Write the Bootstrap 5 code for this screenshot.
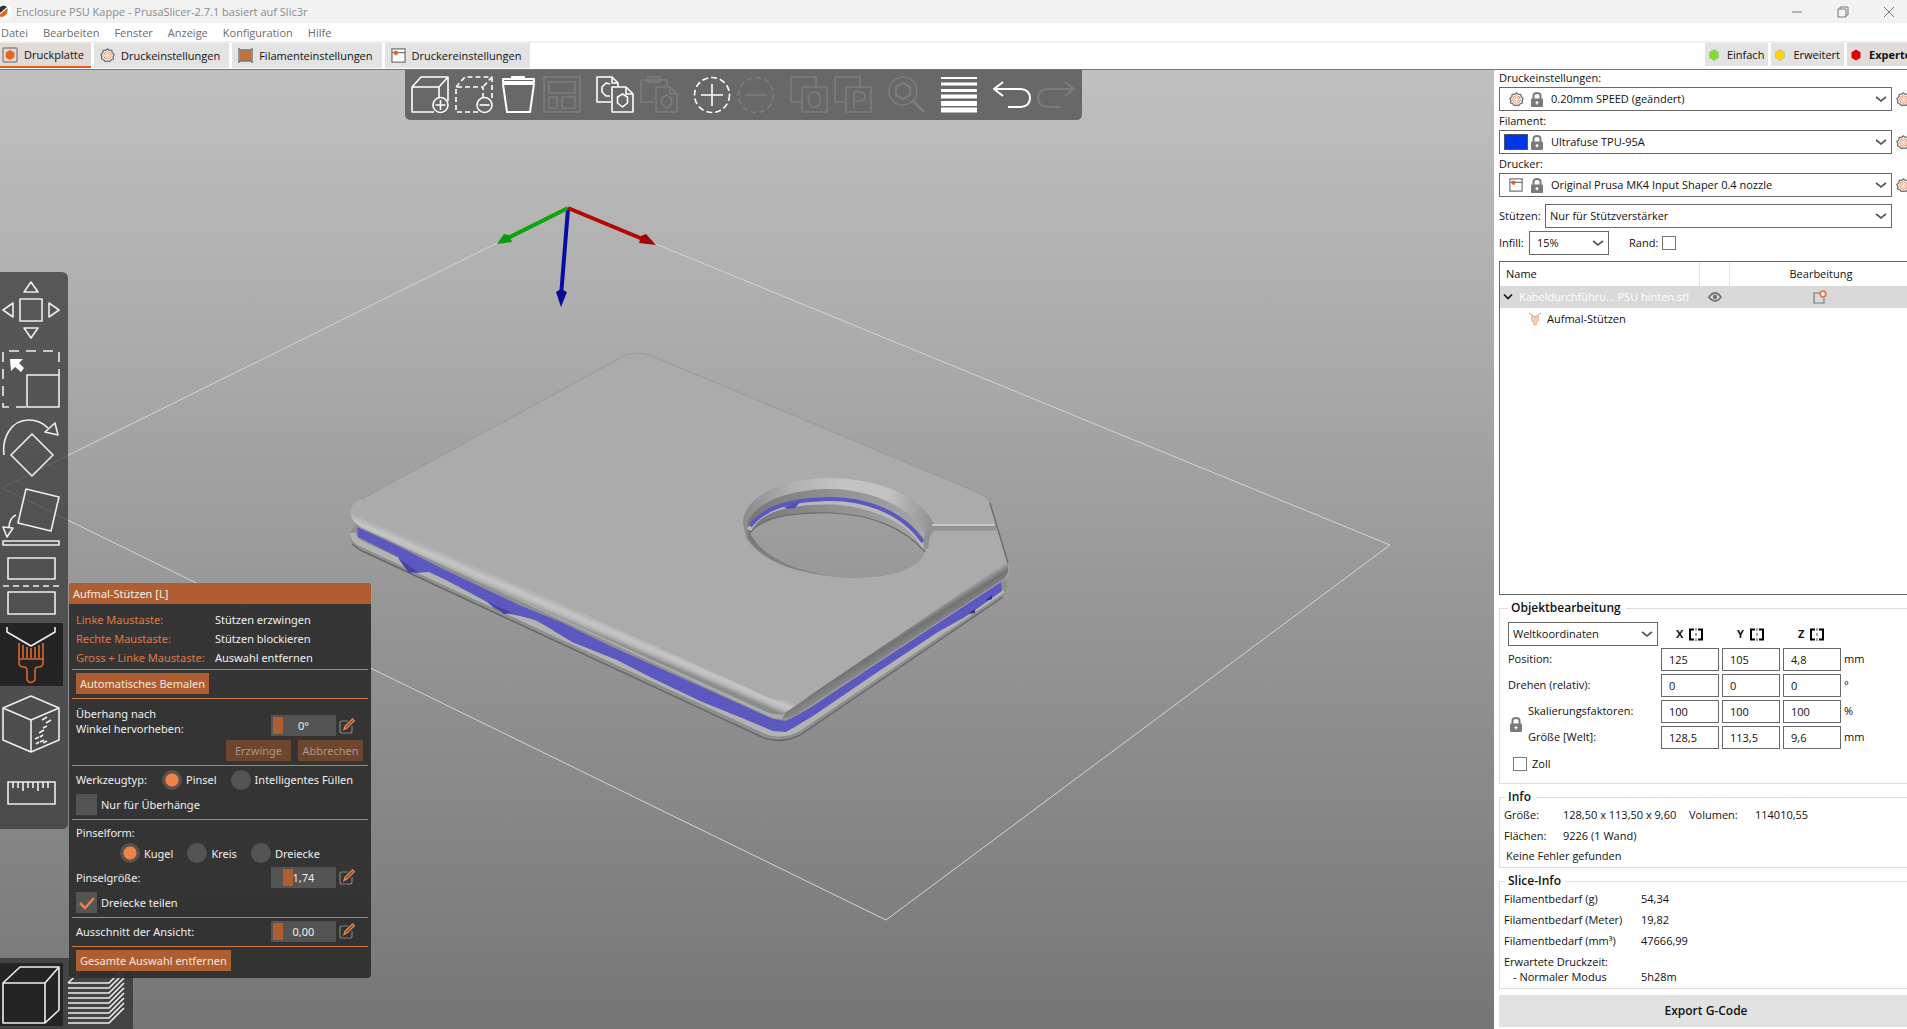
<!DOCTYPE html>
<html lang="de">
<head>
<meta charset="utf-8">
<meta name="viewport" content="width=device-width, initial-scale=1">
<title>Enclosure PSU Kappe - PrusaSlicer-2.7.1 basiert auf Slic3r</title>
<link href="https://cdn.jsdelivr.net/npm/bootstrap@5.3.0/dist/css/bootstrap.min.css" rel="stylesheet">
<style>
:root{--orange:#ae5e30;--orange-hi:#ed8447;--edge:#686868}
body{font-family:"Open Sans","Noto Sans",sans-serif;font-size:11px;line-height:16px;color:#111;background:#fff}
svg{display:block;flex:none}
.ic{fill:none;stroke:currentColor;stroke-width:1.6;stroke-linejoin:round}
button{font:inherit}
/* title bar and menu */
.titlebar{height:23px;background:#f2f2f2;color:#8b8b8b;font-size:11px}
.titlebar .winbtn{background:none;border:0;padding:0;width:46px;height:20px;color:#777}
.winbtns{margin-right:-5px}
.menubar{height:20px;border-bottom:2px solid #f0f0f0;padding:1px 0 0 1px;gap:15px}
.menubar a{color:#6c6c6c;text-decoration:none}
.tabs{height:27px;border-bottom:1px solid #c85a2a;background:#fff}
.tabbtn{height:25px;border:0;border-radius:0;background:#e3e3e3;color:#111;font-size:11px;padding:0 9px 0 6px;gap:6px}
.tabbtn.on{background:#e2dad5;border-bottom:2px solid #e8571b;padding:0 7px 0 2px}
.modebtn{height:23px;border:0;border-radius:0;background:#e3e3e3;color:#111;font-size:11px;padding:0 4px}
.modebtn.on{background:#e2dcd8;font-weight:700;width:60px}
.white{white-space:nowrap}
/* viewport */
.stage{background:linear-gradient(#c0c0c0,#767676)}
.scene{position:absolute;inset:0;width:100%;height:100%}
.toptools{position:absolute;left:405px;top:0;height:50px;background:#686868;border-radius:0 0 5px 5px;padding:0 4px 0 3px}
.toptools button{border:0;background:none;padding:0;width:44px;height:50px;color:#fff}
.toptools button:disabled{color:#7c7c7c}
.toptools .brk{margin-left:9px}
.toptools svg{margin:auto}
.sidetools{position:absolute;left:0;top:202px;width:68px;padding:6px 0 5px;gap:6px;background:rgba(50,50,50,.7);border-radius:0 6px 5px 0}
.tool{border:0;padding:0 0 0 2px;width:63px;height:63px;background:none;color:#eee}
.tool.on{background:#242424}
.viewtools{position:absolute;left:0;bottom:0;width:133px;height:71px;padding:5px 0 2px;background:#434343;gap:2px}
/* gizmo panel */
.gizmo{position:absolute;left:69px;top:513px;width:302px;background:rgba(47,47,47,.94);border-radius:4px;color:#f0f0f0;font-family:"Noto Sans","Open Sans",sans-serif;font-size:11px;line-height:15px;padding-bottom:7px}
.gizmo h2{font-size:11px;line-height:21px;margin:0;padding:0 4px;background:var(--orange);border-radius:4px 4px 0 0}
.gizmo .part{margin:0 3px;padding:3px 4px 4px;border-top:1px solid #cf7a42}
.gizmo .keys{padding:6px 4px 2px;border:0}
.gizmo .over{padding-top:7px}
.keys dt{width:139px;font-weight:400;color:#e0793f;line-height:19px;white-space:nowrap}
.keys dd{margin:0;line-height:19px}
.gbtn{border:0;border-radius:0;background:var(--orange);color:#f4e7df;height:21px;padding:0 4px;font-size:11px;line-height:15px;white-space:nowrap;display:block}
.gbtn:disabled{background:#6e452d;color:#a8978c;opacity:1;width:65px}
.line{height:21px;display:flex;align-items:center}
.rad{appearance:none;width:20px;height:20px;border-radius:50%;background:#545454;margin:0 4px 0 0;flex:none}
label+.rad{margin-left:14px}
.rad:checked{background:radial-gradient(circle,var(--orange-hi) 0 6px,#5b504a 7px)}
.tick{appearance:none;width:21px;height:21px;background:#545454;margin:0 4px 0 0;flex:none}
.tick:checked{background:#545454 url("data:image/svg+xml,%3Csvg xmlns='http://www.w3.org/2000/svg' viewBox='0 0 21 21'%3E%3Cpath d='M4 11l5 5 9-10' fill='none' stroke='%23e98246' stroke-width='2.6'/%3E%3C/svg%3E")}
.slide{position:relative;width:65px;height:21px;margin-left:auto}
.slide input{appearance:none;display:block;width:65px;height:21px;margin:0;padding:0 2px;background:#545454}
.slide input::-webkit-slider-thumb{appearance:none;width:10px;height:17px;background:var(--orange)}
.slide output{position:absolute;inset:0;text-align:center;line-height:21px;pointer-events:none}
.pen{border:0;background:none;padding:0;margin:0 9px 2px 3px}
/* settings column */
.side{width:413px;padding-left:5px;overflow:hidden;background:#fff}
.wide{width:430px}
.prow{display:flex;align-items:center;gap:4px;margin-bottom:2px}
.box{width:393px;height:24px;border:1px solid var(--edge);padding-left:2px}
.box select,.plain{appearance:none;font-size:11px;line-height:16px;border:0;border-radius:0;color:#111;padding:0 26px 0 4px;height:22px;background:#fff url("data:image/svg+xml,%3Csvg xmlns='http://www.w3.org/2000/svg' viewBox='0 0 12 8'%3E%3Cpath d='M1 2q3 2 5 4q2-2 5-4' fill='none' stroke='%23555' stroke-width='1.7'/%3E%3C/svg%3E") no-repeat right 4px center/12px 8px}
.plain{border:1px solid var(--edge);height:24px}
.slot{width:28px;display:flex;justify-content:center;margin-right:1px}
.lab{line-height:16px;height:17px;display:block}
.cb{appearance:none;width:14px;height:14px;border:1px solid #777;margin:0;background:#fff}
.tree{height:334px;border:1px solid var(--edge);margin-top:6px}
.tree th,.tree td{font-weight:400;padding:0;height:22px;line-height:18px;white-space:nowrap}
.tree th{height:24px}
.tree th+th{border-left:1px solid #e3e3e3}
.tree .sel td{background:#d9d9d9;color:#fff}
.grp{border:1px solid #dcdcdc;padding:0 0 0 4px;margin:0;min-width:0}
.grp legend{float:none;width:auto;font-size:12px;line-height:16px;font-weight:600;margin:0 0 0 1px;padding:0 5px 0 3px}
.grp.info{margin-top:6px}
.grp.info legend{line-height:14px}
.num{width:58px;height:23px;border:1px solid var(--edge);border-radius:0;padding:0 7px;font-size:11px;color:#111}
.rowh{height:26px;display:flex;align-items:center;gap:3px}
.rowh .cap{width:150px}
.axis{width:61px;display:flex;align-items:center;gap:6px}
.info div{height:21px;line-height:21px;white-space:nowrap}
.c58{width:59px}.c126{width:126px}.c66{width:66px}.c137{width:137px}
.export{width:414px;height:32px;border:0;border-radius:0;background:#e2e2e2;font-size:12px;font-weight:600;color:#111;padding:0;margin-top:6px}
</style>
<script src="https://cdn.jsdelivr.net/npm/bootstrap@5.3.0/dist/js/bootstrap.bundle.min.js"></script>
</head>
<body class="vh-100 d-flex flex-column overflow-hidden">
<svg width="0" height="0" class="position-absolute" aria-hidden="true">
<symbol id="gear" viewBox="0 0 16 16"><path d="M8 1l2 1.500 2.500 0 .5 2.500L15 7l-1 2 .3 2.500-2.300 1L10.300 14.400 8 14l-2.300.4L4 12.500l-2.300-1L2 9 1 7l2-2 .5-2.500H6z" fill="#fff" stroke="#757575" stroke-width="1.500"/><circle cx="8" cy="8" r="4" fill="none" stroke="#e5875a" stroke-width="1"/><circle cx="8" cy="8" r="2" fill="#fff" stroke="#e5875a" stroke-width=".8"/></symbol>
<symbol id="lock" viewBox="0 0 12 15"><path d="M2.500 7V3.500Q2.500 1 6 1t3.500 2.500V7" fill="none" stroke="#7a7a7a" stroke-width="2"/><rect y="6.500" width="12" height="8.500" rx="1" fill="#7a7a7a"/><path d="M6 9v3.500M4.500 10.700h3" stroke="#fff" stroke-width="1.200"/></symbol>
<symbol id="printer" viewBox="0 0 16 16"><path d="M1 1h14v14H1zM1 5h14" fill="#fff" stroke="#777" stroke-width="1.400"/><path d="M3 3h4v4L5 8 3 6.500z" fill="#d96a2b"/></symbol>
<symbol id="pen" viewBox="0 0 16 16"><path d="M9 3H3Q1 3 1 5v8q0 2 2 2h8q2 0 2-2V8" fill="none" stroke="#7f8487" stroke-width="1.200"/><path d="M5 11.500l1-3 7.500-7.500 1.700 1.700-7.500 7.500z" fill="#53392b" stroke="#ed8447" stroke-width="1.400"/></symbol>
<symbol id="mirror" viewBox="0 0 14 13"><path d="M5 1.500H1v10h4M9 1.500h4v10H9" fill="none" stroke="#000" stroke-width="2"/><path d="M7 0v13" stroke="#777" stroke-width="1.300" stroke-dasharray="3 2"/></symbol>
</svg>

<header>
<div class="titlebar d-flex align-items-center">
<svg width="12" height="16" viewBox="0 0 12 16"><circle cx="3" cy="8" r="8" fill="#fff"/><path d="M0 3q4-3 7 0L0 9z" fill="#333"/><path d="M7.500 4q1 5-3 8-3 1.500-4.500.5V10.500z" fill="#e8641b"/></svg>
<span class="ms-1">Enclosure PSU Kappe - PrusaSlicer-2.7.1 basiert auf Slic3r</span>
<div class="ms-auto d-flex winbtns">
<button class="winbtn" aria-label="Minimieren"><svg class="ic m-auto" width="12" height="12" viewBox="0 0 12 12"><path d="M1 6h10" stroke-width="1"/></svg></button>
<button class="winbtn" aria-label="Wiederherstellen"><svg class="ic m-auto" width="12" height="12" viewBox="0 0 12 12"><path d="M1 3h8v8H1zM3 3V1h8v8H9" stroke-width="1"/></svg></button>
<button class="winbtn" aria-label="Schließen"><svg class="ic m-auto" width="12" height="12" viewBox="0 0 12 12"><path d="M1 1l10 10M11 1L1 11" stroke-width="1"/></svg></button>
</div></div>
<nav class="menubar d-flex align-items-center" aria-label="Menü">
<a href="#">Datei</a><a href="#">Bearbeiten</a><a href="#">Fenster</a><a href="#">Anzeige</a><a href="#">Konfiguration</a><a href="#">Hilfe</a></nav>
<div class="tabs d-flex white" style="gap:3px">
<button class="tabbtn on d-flex align-items-center"><svg width="16" height="16" viewBox="0 0 16 16"><rect x="1" y="1" width="14" height="14" rx="1" fill="none" stroke="#888" stroke-width="1.400"/><path d="M8 3l4.300 2.500v5L8 13l-4.300-2.500v-5z" fill="#e8641b"/></svg>Druckplatte</button>
<button class="tabbtn d-flex align-items-center"><svg width="15" height="15"><use href="#gear"/></svg>Druckeinstellungen</button>
<button class="tabbtn d-flex align-items-center"><svg width="15" height="15" viewBox="0 0 15 15"><path d="M2 2h11v11H2z" fill="#c4713f"/><path d="M1 0v15M14 0v15M1 2h13M1 13h13" stroke="#777" stroke-width="1.500"/></svg>Filamenteinstellungen</button>
<button class="tabbtn d-flex align-items-center"><svg width="15" height="15"><use href="#printer"/></svg>Druckereinstellungen</button>
<div class="ms-auto d-flex" style="gap:3px">
<button class="modebtn d-flex align-items-center gap-2"><svg width="10" height="12" viewBox="0 0 10 12"><path d="M5 .5l4.500 2.800v5.400L5 11.500.5 8.700V3.300z" fill="#7be02f" stroke="#aaa" stroke-width=".5"/></svg>Einfach</button>
<button class="modebtn d-flex align-items-center gap-2"><svg width="10" height="12" viewBox="0 0 10 12"><path d="M5 .5l4.500 2.800v5.400L5 11.500.5 8.700V3.300z" fill="#ffd400" stroke="#aaa" stroke-width=".5"/></svg>Erweitert</button>
<button class="modebtn on d-flex align-items-center gap-2"><svg width="10" height="12" viewBox="0 0 10 12"><path d="M5 .5l4.500 2.800v5.400L5 11.500.5 8.700V3.300z" fill="#e10000"/></svg>Experte</button>
</div></div>
</header>

<div class="d-flex flex-grow-1" style="min-height:0">
<main class="stage flex-grow-1 position-relative overflow-hidden">
<svg class="scene" viewBox="0 70 1494 959" preserveAspectRatio="xMinYMin slice" role="img" aria-label="3D-Ansicht">
<defs>
<linearGradient id="rimL" gradientUnits="userSpaceOnUse" x1="566" y1="605" x2="560" y2="619"><stop offset="0" stop-color="#acacac"/><stop offset=".45" stop-color="#c6c6c6"/><stop offset=".7" stop-color="#b8b8b8"/><stop offset="1" stop-color="#8c8c8c"/></linearGradient>
<linearGradient id="rimR" gradientUnits="userSpaceOnUse" x1="895" y1="632" x2="905" y2="648"><stop offset="0" stop-color="#a8a8a8"/><stop offset=".4" stop-color="#727272"/><stop offset="1" stop-color="#8e8e8e"/></linearGradient>
<linearGradient id="hole" x1="0" y1="0" x2="1" y2="0"><stop offset="0" stop-color="#8a8a8a"/><stop offset=".25" stop-color="#b0b0b0"/><stop offset=".5" stop-color="#c2c2c2"/><stop offset=".75" stop-color="#c4c4c4"/><stop offset="1" stop-color="#909090"/></linearGradient>
<linearGradient id="wall" x1="0" y1="0" x2="1" y2="0"><stop offset="0" stop-color="#777"/><stop offset=".5" stop-color="#929292"/><stop offset="1" stop-color="#a6a6a6"/></linearGradient>
<linearGradient id="floor" x1="0" y1="0" x2="0" y2="1"><stop offset="0" stop-color="#9f9f9f"/><stop offset="1" stop-color="#989898"/></linearGradient>
</defs>
<path d="M568 208L2 488 886 920 1390 545z" fill="none" stroke="#d4d4d4" stroke-width="1"/>
<g><path d="M568 209L561 296" stroke="#0b0ba8" stroke-width="4"/><path d="M556 292l5-3 6 3-6 15z" fill="#0a0a90"/>
<path d="M568 208L506 239" stroke="#0ca50c" stroke-width="4"/><path d="M504 234l5 1 3 7-15 2z" fill="#0a9a0a"/>
<path d="M568 208L645 240" stroke="#b40606" stroke-width="4"/><path d="M646 234l-5 2-2 7 17 2z" fill="#a00505"/></g>
<!-- lower plate -->
<path d="M350 532Q349 544 360 550L764 738Q782 745 800 735L1003 597Q1009 590 1005 575L780 700 356 524z" fill="#8f8f8f"/>
<path d="M353 533Q353 540 362 544L764 730Q782 738 799 728L1003 590" fill="none" stroke="#b3b3b3" stroke-width="6"/>
<path d="M352 544L360 550 764 738Q782 744 800 735L1003 597" fill="none" stroke="#686868" stroke-width="1.500"/>
<!-- painted supports -->
<path d="M357 527L398 546 443 569 519 605 563 623 608 645 675 675 742 705 773 719 786 721 813 706 1001 580 1002 591 965 617 938 632 876 673 813 716 786 732 773 731 742 718 700 701 652 678 617 660 572 642 536 620 520 616 505 613 495 609 487 602 446 580 429 572 415 573 405 567 398 557 358 537z" fill="#5b59c0"/>
<path d="M398 558l20 14-9 1zM488 602l24 11-8 1z" fill="#4644a0"/><path d="M968 614l7-5v4zM985 601l7-6v4z" fill="#34327c"/>
<!-- upper plate -->
<path d="M626 355Q639 351 652 356L981 494Q989 498 991 507L1008 561Q1012 573 1004 580L804 711Q786 724 768 716L362 528Q351 521 352 511Q353 503 362 499z" fill="#ababab"/>
<path d="M362 499L626 355Q639 351 652 356L981 494Q989 498 991 507" fill="none" stroke="#959595" stroke-width=".8"/>
<path d="M364 505Q351 512 364 521L768 705Q782 711 794 704" fill="none" stroke="url(#rimL)" stroke-width="14"/>
<path d="M782 719Q798 717 806 709L1004 579Q1011 572 1007 559L998 568 812 694Q796 706 786 712z" fill="url(#rimR)"/>
<path d="M990 503L1008 563" stroke="#6e6e6e" stroke-width="1.500"/>
<!-- cable hole -->
<path d="M743 523C743 497 782 478 829 478S920 495 934 524L925 551Q915 576 850 578 770 574 746 538z" fill="url(#hole)"/>
<path d="M747 528C748 503 790 489 830 489S915 508 926 536L925 553Q915 576 850 578 770 574 748 538z" fill="url(#wall)"/>
<path d="M749 530C760 508 790 502 827 502S910 518 925 548" fill="none" stroke="#b9b9b9" stroke-width="5"/>
<path d="M750 526C765 507 790 500 827 499S903 512 923 542" fill="none" stroke="#5b59c0" stroke-width="4"/>
<path d="M784 507l16-5-5 6q-8 2-11-1z" fill="#4f4db4"/>
<path d="M750 533C762 517 790 512 830 513S905 528 925 552Q915 578 850 578 768 570 750 533z" fill="url(#floor)"/>
<path d="M750 533C762 517 790 512 830 513S905 528 925 552" fill="none" stroke="#6c6c6c" stroke-width="1.200"/>
<path d="M926 549Q925 534 934 528H996" fill="none" stroke="#929292" stroke-width="5"/><path d="M932 525Q934 525 994 525" stroke="#c6c6c6" stroke-width="2"/>
</svg>

<div class="toptools d-flex" role="toolbar" aria-label="Objekte">
<button aria-label="Hinzufügen"><svg class="ic" width="40" height="40" viewBox="0 0 40 40"><path d="M24 37H2V12h27v11M2 12L11 2h27L29 12M38 2v24"/><circle cx="30.500" cy="30" r="7.500"/><path d="M30.500 25v10M25.500 30h10"/></svg></button>
<button aria-label="Löschen"><svg class="ic" width="40" height="40" viewBox="0 0 40 40"><g stroke-dasharray="5 3"><path d="M24 37H2V12h27v11M2 12L11 2h27L29 12M38 2v24"/></g><circle cx="30.500" cy="30" r="7.500"/><path d="M25.500 30h10"/></svg></button>
<button aria-label="Alles löschen"><svg class="ic" width="40" height="40" viewBox="0 0 40 40"><path d="M5 9h31l-4 28H9zM5 4h31v3H5zM14 4V2h12v2" stroke-width="2"/></svg></button>
<button disabled aria-label="Anordnen"><svg class="ic" width="40" height="40" viewBox="0 0 40 40"><path d="M2 2h36v35H2zM7 7h26v11H7zM7 22h8v11H7zM20 22h13v11H20z"/></svg></button>
<button class="brk" aria-label="Kopieren"><svg class="ic" width="40" height="40" viewBox="0 0 40 40"><path d="M16 27H2V2h15l6 6v4M17 2v6h6M17 12h14l7 7v18H17zM31 12v7h7" /><path d="M27.500 19l5 3v6l-5 4-5-4v-6zM15 9l-4-1-4 4v5l4 4h4"/></svg></button>
<button disabled aria-label="Einfügen"><svg class="ic" width="40" height="40" viewBox="0 0 40 40"><path d="M15 27H2V5h26v6M9 7V2h12v5zM17 12h14l7 7v18H17zM31 12v7h7"/><path d="M27.500 20l5 3v6l-5 4-5-4v-6z"/></svg></button>
<button class="brk" aria-label="Instanz hinzufügen"><svg class="ic" width="40" height="40" viewBox="0 0 40 40"><circle cx="20" cy="20" r="17.500" stroke-dasharray="6 3"/><path d="M20 9v22M9 20h22"/></svg></button>
<button disabled aria-label="Instanz entfernen"><svg class="ic" width="40" height="40" viewBox="0 0 40 40"><circle cx="20" cy="20" r="17.500" stroke-dasharray="6 3"/><path d="M9 20h22"/></svg></button>
<button class="brk" disabled aria-label="In Objekte trennen"><svg class="ic" width="40" height="40" viewBox="0 0 40 40"><path d="M12 27H2V2h25v10M13 12h25v25H13z"/><rect x="20" y="17" width="11" height="15" rx="5"/></svg></button>
<button disabled aria-label="In Teile trennen"><svg class="ic" width="40" height="40" viewBox="0 0 40 40"><path d="M12 27H2V2h25v10M13 12h25v25H13zM21 33V17h6q5 0 5 4.500T27 26h-6"/></svg></button>
<button class="brk" disabled aria-label="Suchen"><svg class="ic" width="40" height="40" viewBox="0 0 40 40"><circle cx="17" cy="16" r="14"/><path d="M17 8l7 4v8l-7 4-7-4v-8z" stroke-width="2.400"/><path d="M27 26l11 11" stroke-width="3"/></svg></button>
<button class="brk" aria-label="Variable Schichthöhe"><svg width="40" height="40" viewBox="0 0 40 40" fill="#fff"><path d="M2 2h36v2H2zM2 7.500h36v3H2zM2 14h36v3H2zM2 19.500h36v4H2zM2 26h36v5H2zM2 32.500h36v5H2z"/></svg></button>
<button class="brk" aria-label="Rückgängig"><svg class="ic" width="40" height="40" viewBox="0 0 40 40"><path d="M11 7L2 14l9 7M2 14h27q9 1 9 9t-9 9H16" stroke-width="2"/></svg></button>
<button disabled aria-label="Wiederholen"><svg class="ic" width="40" height="40" viewBox="0 0 40 40"><path d="M29 7l9 7-9 7M38 14H11q-9 1-9 9t9 9h13" stroke-width="2"/></svg></button>
</div>

<div class="sidetools d-flex flex-column" role="toolbar" aria-label="Werkzeuge">
<button class="tool" aria-label="Bewegen"><svg class="ic" width="58" height="58" viewBox="0 0 58 58"><path d="M18 18h22v22H18zM29 1l7 10H22zM29 57l7-10H22zM1 29l10-7v14zM57 29l-10-7v14z"/></svg></button>
<button class="tool" aria-label="Skalieren"><svg class="ic" width="58" height="58" viewBox="0 0 58 58"><path d="M24 57H1V1h56v24" stroke-dasharray="10 7"/><path d="M25 25h32v32H25z"/><path d="M8 9h13l-4 4 5 5-3 4-6-5-4 4z" fill="#fff" stroke="none"/></svg></button>
<button class="tool" aria-label="Drehen"><svg class="ic" width="58" height="58" viewBox="0 0 58 58"><path d="M30 15l21 21-21 21L9 36zM2 36C0 20 8 1 27 1q11 0 19 8M43 13L53 4l3 12z"/></svg></button>
<button class="tool" aria-label="Auf Fläche legen"><svg class="ic" width="58" height="58" viewBox="0 0 58 58"><path d="M24 1l33 8-8 34-33-8zM14 27q-7 3-7 13M1 39l10 1-6 9zM1 53h56v4H1z"/></svg></button>
<button class="tool" aria-label="Schneiden"><svg class="ic" width="58" height="58" viewBox="0 0 58 58"><path d="M6 1h47v21H6zM6 35h47v22H6z"/><path d="M1 29h56" stroke-dasharray="6 4"/></svg></button>
<button class="tool on" aria-label="Aufmal-Stützen"><svg class="ic" width="58" height="58" viewBox="0 0 58 58"><path d="M5 1v5l24 14L53 6V1"/><path d="M17 17v16h24V17M21 19v13M25 21v11M29 22v10M33 21v11M37 19v13M17 33v4q0 4 5 4 3 0 3 4v9q4 5 8 0v-9q0-4 3-4 5 0 5-4v-4" stroke="#d9682c"/></svg></button>
<button class="tool" aria-label="Naht"><svg class="ic" width="58" height="58" viewBox="0 0 58 58"><path d="M29 1l28 12v32L29 57 1 45V13zM1 13l28 12 28-12M29 25v32"/><path d="M40 25l5-3M44 28l5-3M41 33l4-2M37 38l5-3M38 42l3-2M33 44l4-2M38 47l4-2M34 49l3-2M41 48l4-2"/></svg></button>
<button class="tool" aria-label="Messen"><svg class="ic" width="58" height="58" viewBox="0 0 58 58"><path d="M6 18h47v22H6zM11 18v6M16 18v6M21 18v9M26 18v6M31 18v6M36 18v9M41 18v6M46 18v6"/></svg></button>
</div>

<div class="viewtools d-flex" role="toolbar" aria-label="Ansicht">
<button class="tool on" aria-label="3D-Editor"><svg class="ic" width="58" height="58" viewBox="0 0 58 58"><path d="M1 17h42v40H1zM1 17L18 1h39L43 17M57 1v43L43 57"/></svg></button>
<button class="tool" aria-label="Vorschau"><svg class="ic" width="58" height="58" viewBox="0 0 58 58"><path d="M1 17h41L57 2M1 17L18 1M1 22h41L57 7M1 27h41l15-15M1 32h41l15-15M1 37h41l15-15M1 42h41l15-15M1 47h41l15-15M1 52h41l15-15M1 57h41l15-15"/></svg></button>
</div>

<section class="gizmo">
<h2 class="fw-normal">Aufmal-Stützen [L]</h2>
<dl class="part keys mb-0">
<div class="d-flex"><dt>Linke Maustaste:</dt><dd>Stützen erzwingen</dd></div>
<div class="d-flex"><dt>Rechte Maustaste:</dt><dd>Stützen blockieren</dd></div>
<div class="d-flex"><dt>Gross + Linke Maustaste:</dt><dd>Auswahl entfernen</dd></div></dl>
<div class="part"><button class="gbtn">Automatisches Bemalen</button></div>
<div class="part over">
<div class="d-flex align-items-end mb-1"><label for="ang">Überhang nach<br>Winkel hervorheben:</label><div class="slide"><input type="range" id="ang" min="0" max="90" value="0"><output for="ang">0°</output></div><button class="pen" aria-label="Bearbeiten"><svg width="16" height="16"><use href="#pen"/></svg></button></div>
<div class="d-flex justify-content-end" style="gap:7px;padding-right:1px"><button class="gbtn" disabled>Erzwinge</button><button class="gbtn" disabled>Abbrechen</button></div></div>
<div class="part">
<div class="line mb-1"><span style="width:86px">Werkzeugtyp:</span><input class="rad" type="radio" name="tt" id="t1" checked><label for="t1">Pinsel</label><input class="rad" type="radio" name="tt" id="t2"><label for="t2">Intelligentes Füllen</label></div>
<div class="line"><input class="tick" type="checkbox" id="oh"><label for="oh">Nur für Überhänge</label></div></div>
<div class="part">
<div class="line" style="height:18px">Pinselform:</div>
<div class="line" style="padding-left:44px;height:24px;margin-bottom:2px"><input class="rad" type="radio" name="bf" id="b1" checked><label for="b1">Kugel</label><input class="rad" type="radio" name="bf" id="b2"><label for="b2">Kreis</label><input class="rad" type="radio" name="bf" id="b3"><label for="b3">Dreiecke</label></div>
<div class="line mb-1"><label for="bs">Pinselgröße:</label><div class="slide"><input type="range" id="bs" min="0" max="9" step="0.01" value="1.74"><output for="bs">1,74</output></div><button class="pen" aria-label="Bearbeiten"><svg width="16" height="16"><use href="#pen"/></svg></button></div>
<div class="line"><input class="tick" type="checkbox" id="dt" checked><label for="dt">Dreiecke teilen</label></div></div>
<div class="part"><div class="line"><label for="cv">Ausschnitt der Ansicht:</label><div class="slide"><input type="range" id="cv" min="0" max="1" step="0.01" value="0"><output for="cv">0,00</output></div><button class="pen" aria-label="Bearbeiten"><svg width="16" height="16"><use href="#pen"/></svg></button></div></div>
<div class="part pb-0"><button class="gbtn">Gesamte Auswahl entfernen</button></div>
</section>
</main>

<aside class="side flex-shrink-0"><div class="wide">
<label class="lab" for="s1">Druckeinstellungen:</label>
<div class="prow"><div class="box d-flex align-items-center"><span class="slot"><svg width="15" height="15"><use href="#gear"/></svg></span><svg width="12" height="15"><use href="#lock"/></svg><select id="s1" class="flex-grow-1 ms-1"><option>0.20mm SPEED (geändert)</option></select></div><svg width="15" height="15"><use href="#gear"/></svg></div>
<label class="lab" for="s2">Filament:</label>
<div class="prow"><div class="box d-flex align-items-center"><span class="slot"><svg width="24" height="16"><rect x=".5" y=".5" width="23" height="15" fill="#0036e8" stroke="#556"/></svg></span><svg width="12" height="15"><use href="#lock"/></svg><select id="s2" class="flex-grow-1 ms-1"><option>Ultrafuse TPU-95A</option></select></div><svg width="15" height="15"><use href="#gear"/></svg></div>
<label class="lab" for="s3">Drucker:</label>
<div class="prow mb-0"><div class="box d-flex align-items-center"><span class="slot"><svg width="14" height="14"><use href="#printer"/></svg></span><svg width="12" height="15"><use href="#lock"/></svg><select id="s3" class="flex-grow-1 ms-1"><option>Original Prusa MK4 Input Shaper 0.4 nozzle</option></select></div><svg width="15" height="15"><use href="#gear"/></svg></div>
<div class="d-flex align-items-center" style="width:393px;margin:7px 0 3px"><label for="s4" style="width:46px">Stützen:</label><select id="s4" class="plain flex-grow-1"><option>Nur für Stützverstärker</option></select></div>
<div class="d-flex align-items-center"><label for="s5" style="width:30px">Infill:</label><select id="s5" class="plain" style="width:80px;padding-left:7px"><option>15%</option></select><label for="rand" class="ms-3 me-1 ps-1">Rand:</label><input class="cb" type="checkbox" id="rand"></div>

<div class="tree"><table style="width:428px;table-layout:fixed">
<colgroup><col style="width:199px"><col style="width:30px"><col></colgroup>
<tr><th style="padding-left:6px">Name</th><th></th><th style="padding-left:60px">Bearbeitung</th></tr>
<tr class="sel"><td><div class="d-flex align-items-center" style="padding-left:3px"><svg width="10" height="8" viewBox="0 0 10 8"><path d="M1 1.500l4 4 4-4" fill="none" stroke="#111" stroke-width="1.600"/></svg><span style="margin-left:6px">Kabeldurchführu... PSU hinten.stl</span></div></td>
<td><svg style="margin-left:9px" width="14" height="10" viewBox="0 0 14 10"><path d="M1 5q6-8 12 0-6 8-12 0z" fill="#eee" stroke="#777" stroke-width="1.800"/><circle cx="7" cy="5" r="2.300" fill="#777"/></svg></td>
<td><svg style="margin-left:84px" width="14" height="14" viewBox="0 0 14 14"><path d="M7 3H1v10h10V8" fill="none" stroke="#777" stroke-width="1.200"/><circle cx="10" cy="4" r="2.800" fill="#fff" stroke="#e8743b" stroke-width="1.800"/></svg></td></tr>
<tr><td><div class="d-flex align-items-center" style="padding-left:29px"><svg width="12" height="14" viewBox="0 0 12 14"><path d="M0 1l6 4 6-4" fill="none" stroke="#aaa"/><path d="M2.500 4v5l2 1v3h3v-3l2-1V4L6 6z" fill="#f6ccb4" stroke="#eeae8c" stroke-width=".8"/></svg><span style="margin-left:6px">Aufmal-Stützen</span></div></td><td></td><td></td></tr>
</table></div>

<fieldset class="grp" style="margin-top:5px;height:184px;padding-left:8px"><legend style="margin-left:0">Objektbearbeitung</legend>
<div class="d-flex align-items-center" style="margin-top:6px"><select class="plain" style="width:150px" aria-label="Koordinaten"><option>Weltkoordinaten</option></select>
<div class="d-flex fw-bold" style="margin-left:18px"><span class="axis">X <svg width="14" height="13"><use href="#mirror"/></svg></span><span class="axis">Y <svg width="14" height="13"><use href="#mirror"/></svg></span><span class="axis">Z <svg width="14" height="13"><use href="#mirror"/></svg></span></div></div>
<div class="rowh"><span class="cap">Position:</span><input class="num" value="125" aria-label="Position X"><input class="num" value="105" aria-label="Position Y"><input class="num" value="4,8" aria-label="Position Z"><span>mm</span></div>
<div class="rowh"><span class="cap">Drehen (relativ):</span><input class="num" value="0" aria-label="Drehen X"><input class="num" value="0" aria-label="Drehen Y"><input class="num" value="0" aria-label="Drehen Z"><span>°</span></div>
<div class="d-flex align-items-center"><svg width="14" height="15" viewBox="-2 0 14 15" style="margin-right:6px"><use href="#lock" width="12" height="15"/></svg><div>
<div class="rowh"><span style="width:130px">Skalierungsfaktoren:</span><input class="num" value="100" aria-label="Skalierung X"><input class="num" value="100" aria-label="Skalierung Y"><input class="num" value="100" aria-label="Skalierung Z"><span>%</span></div>
<div class="rowh"><span style="width:130px">Größe [Welt]:</span><input class="num" value="128,5" aria-label="Größe X"><input class="num" value="113,5" aria-label="Größe Y"><input class="num" value="9,6" aria-label="Größe Z"><span>mm</span></div></div></div>
<div class="d-flex align-items-center" style="margin-top:6px;padding-left:5px"><input class="cb" type="checkbox" id="zoll"><label for="zoll" style="margin-left:5px">Zoll</label></div>
</fieldset>

<fieldset class="grp info" style="height:78px"><legend>Info</legend>
<div class="d-flex"><span class="c58">Größe:</span><span class="c126">128,50 x 113,50 x 9,60</span><span class="c66">Volumen:</span><span>114010,55</span></div>
<div class="d-flex"><span class="c58">Flächen:</span><span>9226 (1 Wand)</span></div>
<div style="line-height:19px;padding-left:2px">Keine Fehler gefunden</div></fieldset>

<fieldset class="grp info" style="height:115px"><legend>Slice-Info</legend>
<div class="d-flex"><span class="c137">Filamentbedarf (g)</span><span>54,34</span></div>
<div class="d-flex"><span class="c137">Filamentbedarf (Meter)</span><span>19,82</span></div>
<div class="d-flex"><span class="c137">Filamentbedarf (mm³)</span><span>47666,99</span></div>
<div style="height:18px">Erwartete Druckzeit:</div>
<div class="d-flex" style="height:15px;line-height:15px"><span class="c137" style="padding-left:9px">- Normaler Modus</span><span>5h28m</span></div></fieldset>
<button class="export">Export G-Code</button>
</div></aside>
</div>
</body>
</html>
